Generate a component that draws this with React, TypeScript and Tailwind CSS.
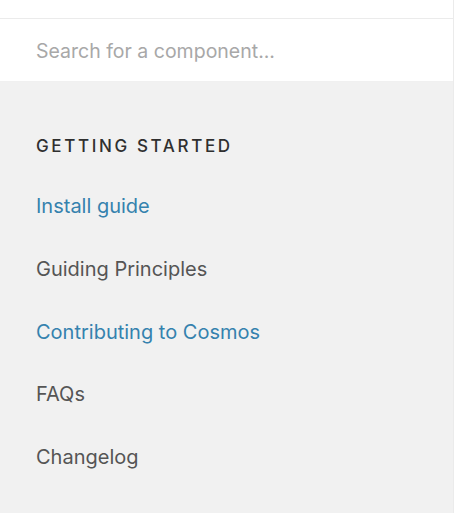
import React from "react";

const items = [
  { label: "Install guide", active: true },
  { label: "Guiding Principles", active: false },
  { label: "Contributing to Cosmos", active: true },
  { label: "FAQs", active: false },
  { label: "Changelog", active: false },
];

export default function App() {
  return (
    <div className="w-[474px] h-[517px] bg-white" style={{ fontFamily: "Inter, 'Noto Sans', sans-serif" }}>
      <div className="w-[454px] border-r border-[#ebebeb] h-[513px] flex flex-col">
        <div className="h-[19px] border-b border-[#ebebeb] bg-white" />
        <div className="h-[63px] bg-white flex items-center px-9 pt-[3px] border-b border-[#f0f0f0]">
          <input
            className="w-full bg-transparent outline-none text-[19.5px] text-[#999] placeholder:text-[#a8a8a8]"
            placeholder="Search for a component..."
          />
        </div>
        <div className="flex-1 bg-[#f1f1f1] px-9 pt-[52px]">
          <div className="text-[17px] font-medium tracking-[0.155em] text-[#2f2f2f] leading-6">GETTING STARTED</div>
          <ul className="mt-[36px] flex flex-col gap-[37.75px]">
            {items.map((it) => (
              <li
                key={it.label}
                className={`text-[20px] leading-[25px] ${it.active ? "text-[#3582ae]" : "text-[#555]"}`}
              >
                {it.label}
              </li>
            ))}
          </ul>
        </div>
      </div>
    </div>
  );
}
